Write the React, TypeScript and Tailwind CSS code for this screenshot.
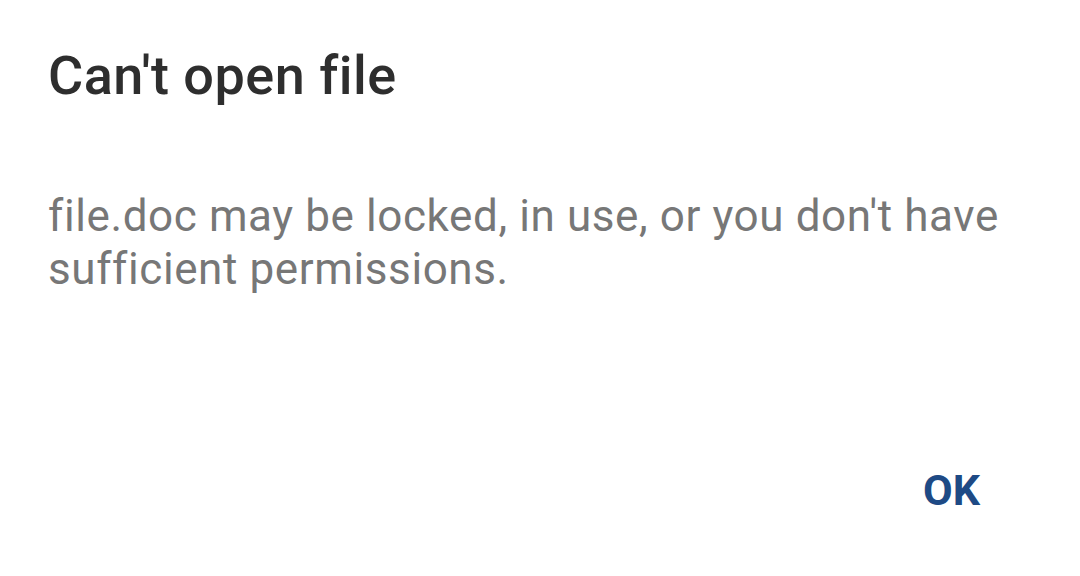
export default function App() {
  return (
    <div className="w-[1080px] h-[576px] bg-white flex flex-col" style={{ fontFamily: 'Roboto, "Noto Sans", sans-serif' }}>
      <div className="pl-[48px] pt-[44px]">
        <h1 className="text-[54px] leading-[64px] font-medium text-[#2e2e2e] tracking-[0.5px]">Can't open file</h1>
        <p className="mt-[82px] text-[44px] leading-[53px] text-[#777777] tracking-[0.6px] pr-[30px]">
          file.doc may be locked, in use, or you don't have sufficient permissions.
        </p>
      </div>
      <div className="flex-1 flex items-end justify-end pr-[100px] pb-[62px]">
        <button className="text-[43px] leading-[48px] font-bold text-[#1e4a85]">OK</button>
      </div>
    </div>
  )
}
